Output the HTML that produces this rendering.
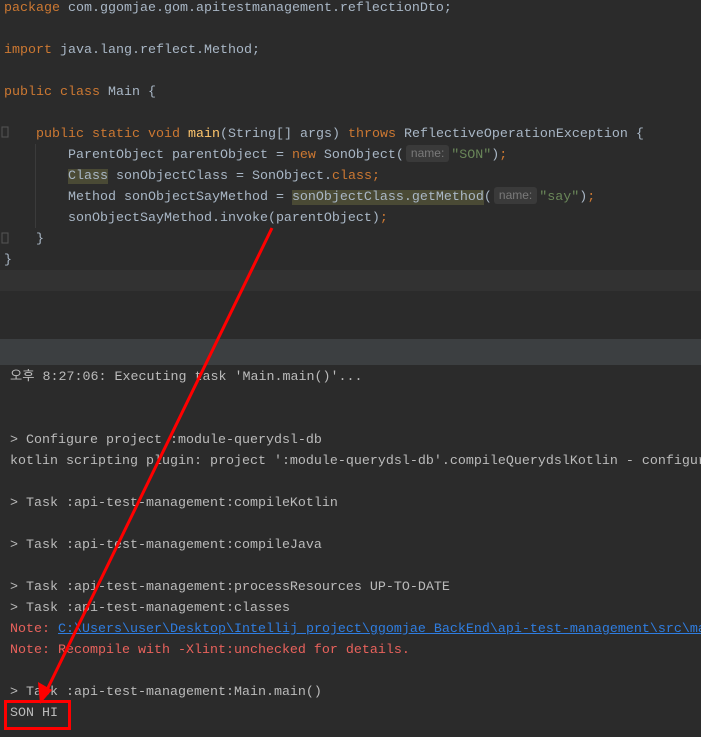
<!DOCTYPE html>
<html><head><meta charset="utf-8"><style>
html,body{margin:0;padding:0;background:#2b2b2b;width:701px;height:737px;overflow:hidden;position:relative}
.l{position:absolute;left:4px;white-space:pre;font-family:"Liberation Mono","Noto Sans CJK KR",monospace;font-size:13.33px;line-height:21px;height:21px;color:#a9b7c6}
.k{color:#cc7832}.f{color:#ffc66d}.s{color:#6a8759}
.h{background:#4a4a35}
.hint{display:inline-block;background:#3a3a3a;color:#7a7a7a;font-family:"Liberation Sans",sans-serif;font-size:12px;line-height:17px;padding:0 5px;border-radius:3px;margin:0 2px;vertical-align:1px}
.c{color:#bbbbbb}.r{color:#e8625c}.u{color:#2f7de0;text-decoration:underline}
</style></head><body>
<div style="position:absolute;left:0;top:270px;width:701px;height:21px;background:#323232"></div>
<div style="position:absolute;left:0;top:339px;width:701px;height:26px;background:#3c3f41"></div>
<div style="position:absolute;left:35px;top:144px;width:1px;height:84px;background:#3b3b3b"></div>
<div class="l" style="top:-2px"><span class="k">package</span> com.ggomjae.gom.apitestmanagement.reflectionDto;</div>
<div class="l" style="top:40px"><span class="k">import</span> java.lang.reflect.Method;</div>
<div class="l" style="top:82px"><span class="k">public class</span> Main {</div>
<div class="l" style="top:124px">    <span class="k">public static void</span> <span class="f">main</span>(String[] args) <span class="k">throws</span> ReflectiveOperationException {</div>
<div class="l" style="top:145px">        ParentObject parentObject = <span class="k">new</span> SonObject(<span class="hint">name:</span><span class="s">"SON"</span>)<span class="k">;</span></div>
<div class="l" style="top:166px">        <span class="h">Class</span> sonObjectClass = SonObject.<span class="k">class;</span></div>
<div class="l" style="top:187px">        Method sonObjectSayMethod = <span class="h">sonObjectClass.getMethod</span>(<span class="hint">name:</span><span class="s">"say"</span>)<span class="k">;</span></div>
<div class="l" style="top:208px">        sonObjectSayMethod.invoke(parentObject)<span class="k">;</span></div>
<div class="l" style="top:229px">    }</div>
<div class="l" style="top:250px">}</div>
<div class="l c" style="top:367px;left:10px">오후 8:27:06: Executing task 'Main.main()'...</div>
<div class="l c" style="top:430px;left:10px">&gt; Configure project :module-querydsl-db</div>
<div class="l c" style="top:451px;left:10px">kotlin scripting plugin: project ':module-querydsl-db'.compileQuerydslKotlin - configur</div>
<div class="l c" style="top:493px;left:10px">&gt; Task :api-test-management:compileKotlin</div>
<div class="l c" style="top:535px;left:10px">&gt; Task :api-test-management:compileJava</div>
<div class="l c" style="top:577px;left:10px">&gt; Task :api-test-management:processResources UP-TO-DATE</div>
<div class="l c" style="top:598px;left:10px">&gt; Task :api-test-management:classes</div>
<div class="l r" style="top:619px;left:10px">Note: <span class="u">C:\Users\user\Desktop\Intellij_project\ggomjae_BackEnd\api-test-management\src\ma</span></div>
<div class="l r" style="top:640px;left:10px">Note: Recompile with -Xlint:unchecked for details.</div>
<div class="l c" style="top:682px;left:10px">&gt; Task :api-test-management:Main.main()</div>
<div class="l c" style="top:703px;left:10px">SON HI</div>
<svg width="701" height="737" style="position:absolute;left:0;top:0">
<rect x="2" y="127" width="6" height="10" fill="none" stroke="#555" stroke-width="1"/>
<rect x="2" y="233" width="6" height="10" fill="none" stroke="#555" stroke-width="1"/>
<line x1="272" y1="228" x2="44" y2="696" stroke="#ff0000" stroke-width="3"/>
<polygon points="40,704 38,682 52,690" fill="#ff0000"/>
<rect x="5.5" y="701.5" width="64" height="27" fill="none" stroke="#ff0000" stroke-width="3"/>
</svg>
</body></html>
